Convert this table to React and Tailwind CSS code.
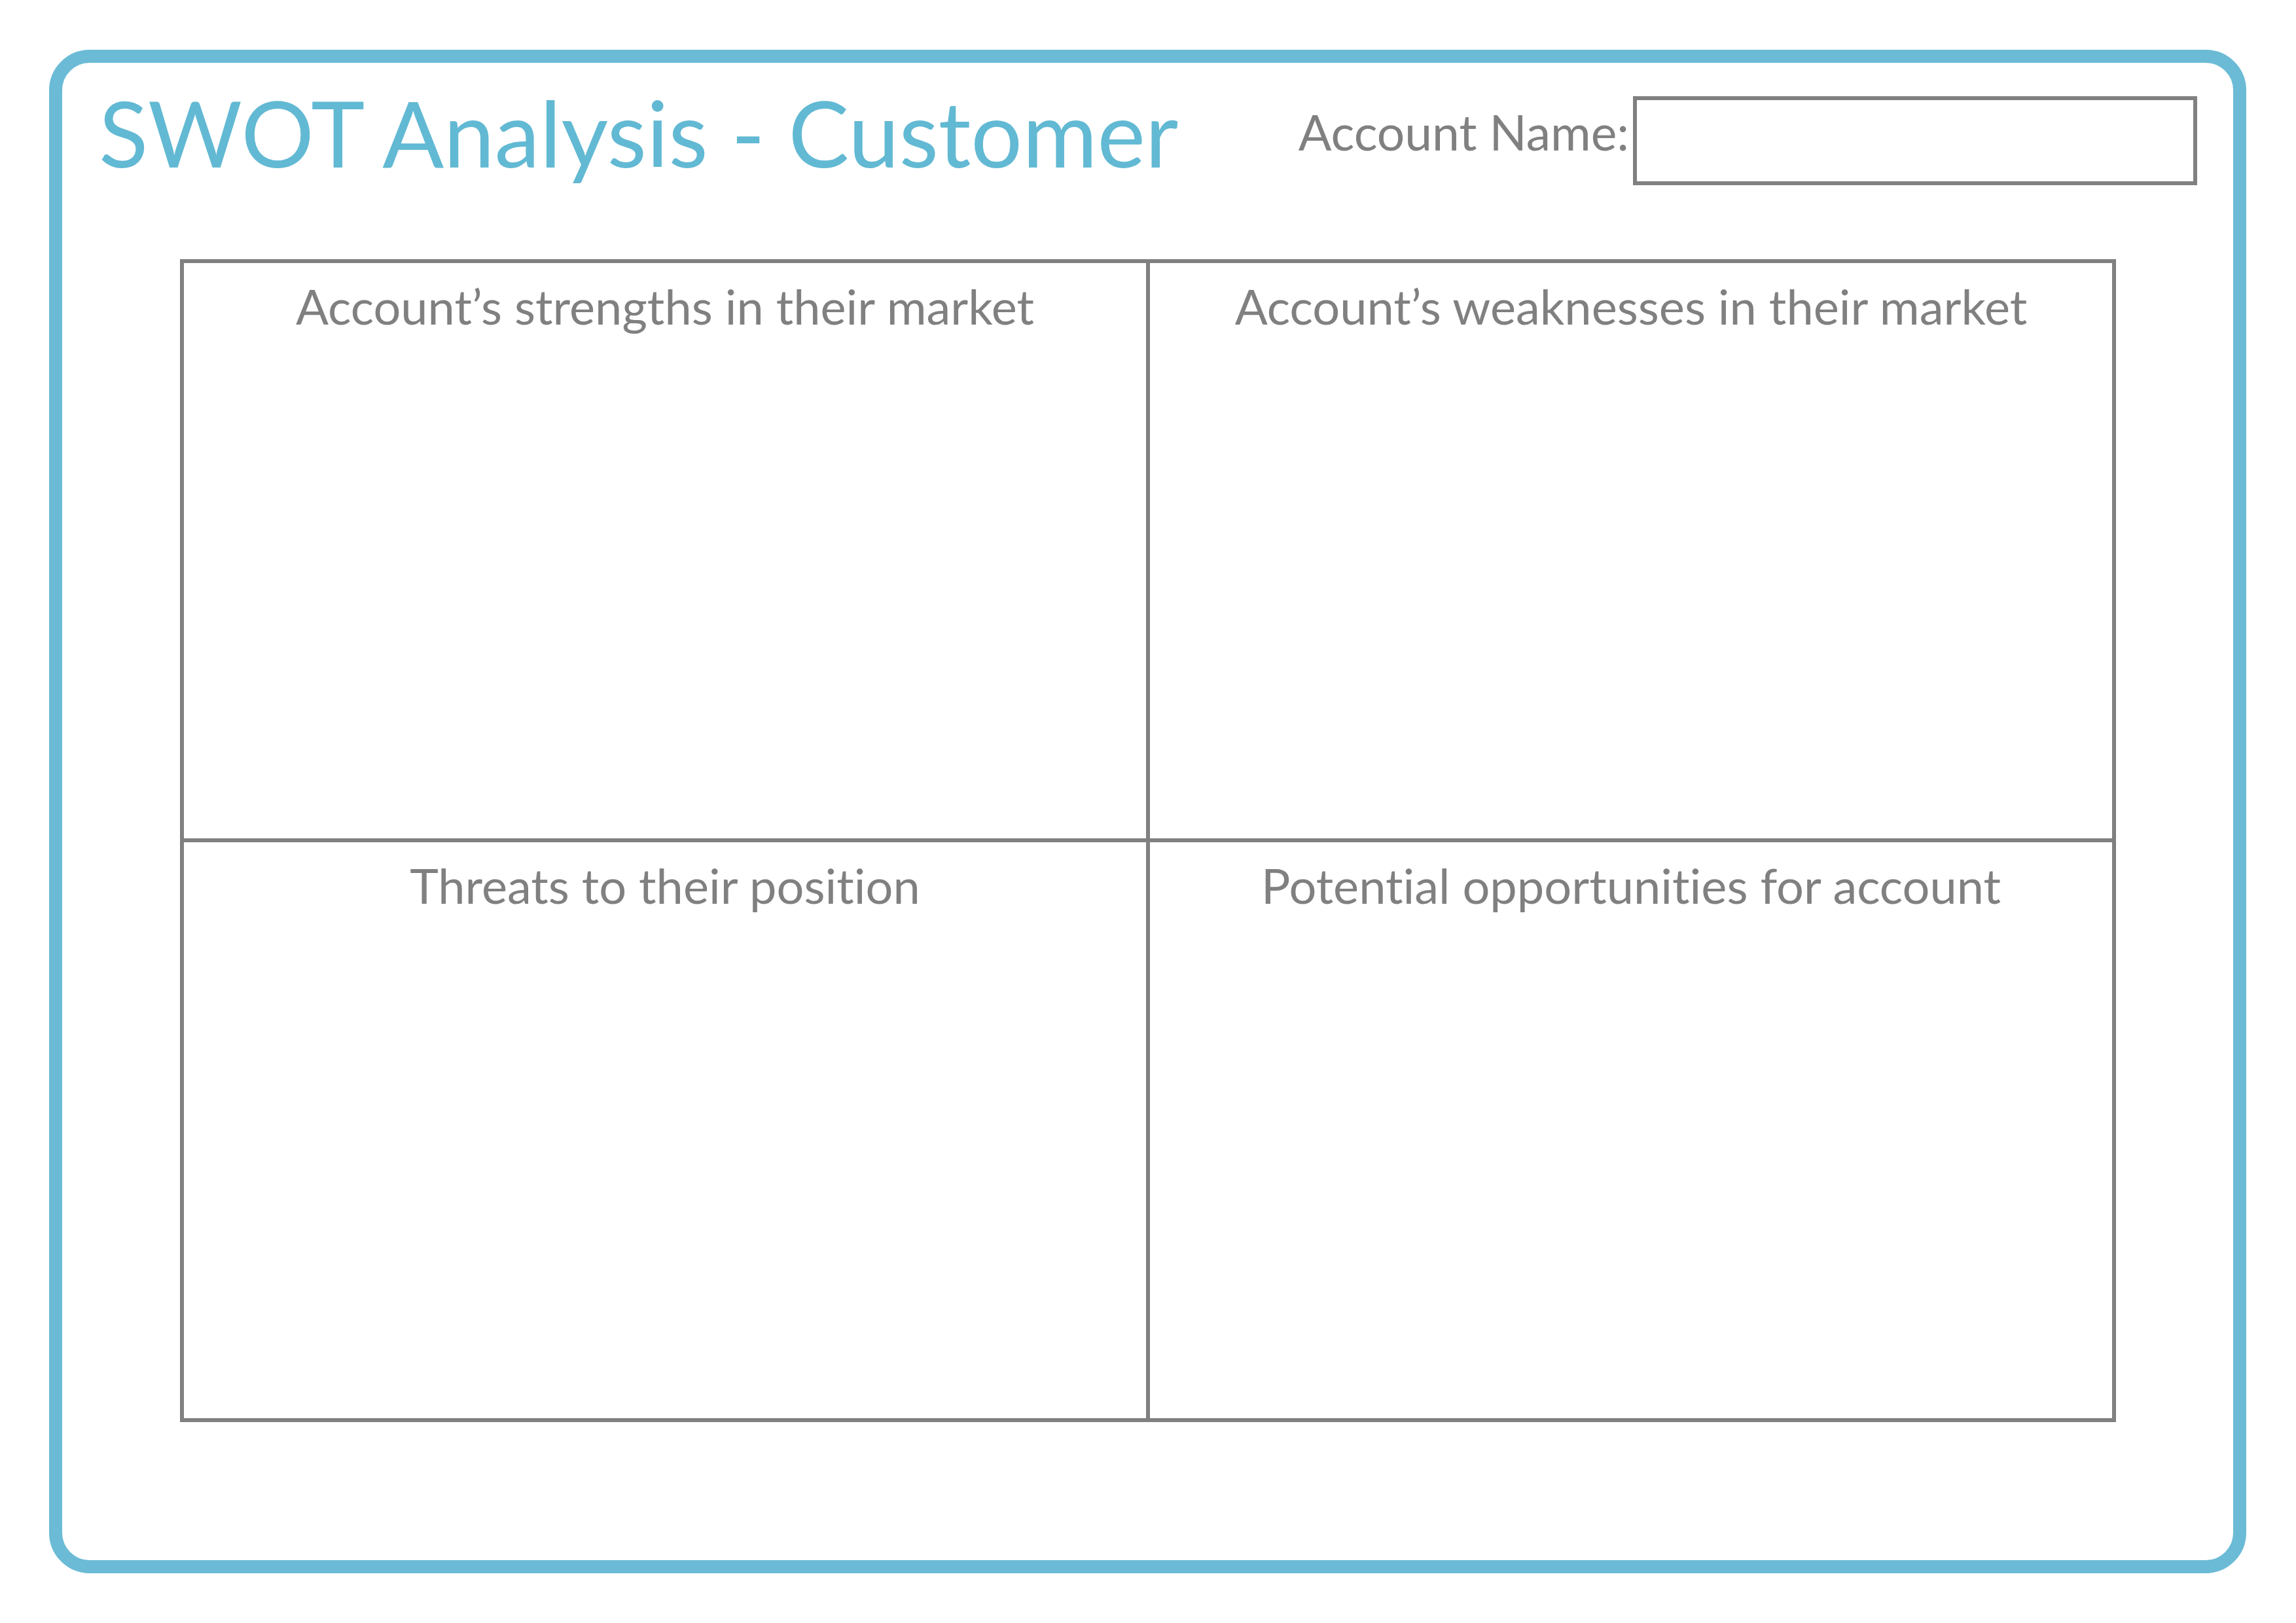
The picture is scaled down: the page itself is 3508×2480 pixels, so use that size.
export default function App() {
  const font = { fontFamily: "Lato, 'Open Sans', sans-serif" };
  const cells = [
    "Account’s strengths in their market",
    "Account’s weaknesses in their market",
    "Threats to their position",
    "Potential opportunities for account",
  ];
  return (
    <div className="w-[3508px] h-[2480px] bg-white pl-[75px] pt-[76px] [font-variant-ligatures:none]" style={font}>
      <div className="w-[3357px] h-[2328px] border-[20px] border-[#6bbbd6] rounded-[62px] flex flex-col">
        <div className="h-[300px] flex items-start pt-[37px] pl-[56px] pr-[55px]">
          <div className="text-[139px] leading-none text-[#62b9d3] font-normal whitespace-nowrap">
            SWOT Analysis - Customer
          </div>
          <div className="ml-auto mt-[14px] flex items-start">
            <div className="mt-[17px] mr-[6px] text-[75px] leading-none text-[#808080] whitespace-nowrap">
              Account Name:
            </div>
            <div className="w-[862px] h-[136px] border-[6px] border-[#808080]"></div>
          </div>
        </div>
        <div className="ml-[180px] w-[2958px] h-[1777px] border-[6px] border-[#808080] grid grid-cols-[1476px_1470px] grid-rows-[885px_880px]">
          {cells.map((t, i) => (
            <div
              key={i}
              className={
                "flex justify-center pt-[29px] text-[74px] leading-none text-[#808080] whitespace-nowrap " +
                (i % 2 === 0 ? "border-r-[6px] border-[#808080] " : "") +
                (i < 2 ? "border-b-[6px] border-[#808080]" : "")
              }
            >
              {t}
            </div>
          ))}
        </div>
      </div>
    </div>
  );
}
